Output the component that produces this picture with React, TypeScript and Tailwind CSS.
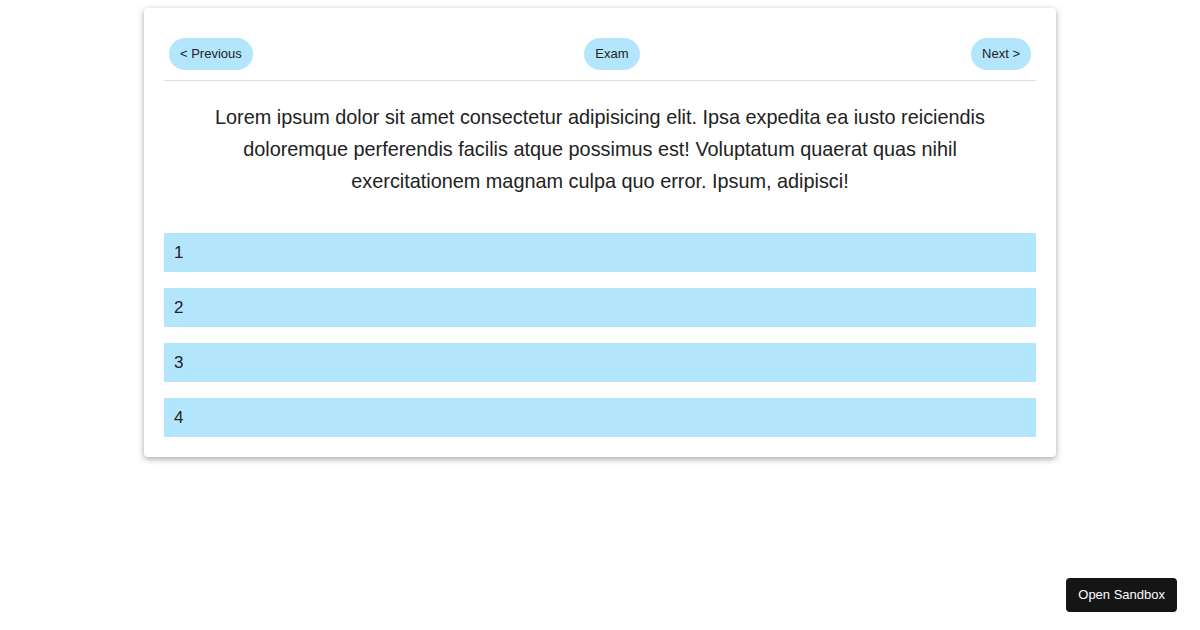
export default function App() {
  const options = ['1', '2', '3', '4'];

  return (
    <div className="min-h-[630px] bg-white font-['Liberation_Sans',Arial,sans-serif] text-[#222]">
      <div className="pt-2 flex justify-center">
        <div className="w-[912px] bg-white rounded-[4px] shadow-[0_2px_6px_rgba(0,0,0,0.35)] px-5 pb-5">
          {/* Header */}
          <div className="flex items-center justify-between pt-[30px] pb-[10px] px-[5px] border-b border-[#dddddd]">
            <button className="h-8 px-[11px] rounded-full bg-[#b3e5fc] text-[13px] text-[#222]">&lt; Previous</button>
            <button className="h-8 px-[11px] rounded-full bg-[#b3e5fc] text-[13px] text-[#222]">Exam</button>
            <button className="h-8 px-[11px] rounded-full bg-[#b3e5fc] text-[13px] text-[#222]">Next &gt;</button>
          </div>

          <p className="mt-5 px-10 text-center text-[19.85px] leading-[32px] text-[#222]">
            Lorem ipsum dolor sit amet consectetur adipisicing elit. Ipsa expedita ea iusto reiciendis doloremque perferendis facilis atque possimus est! Voluptatum quaerat quas nihil exercitationem magnam culpa quo error. Ipsum, adipisci!
          </p>

          <div className="mt-9 flex flex-col gap-4">
            {options.map((o) => (
              <div key={o} className="h-[39px] flex items-center pl-[10px] bg-[#b3e5fc] text-[17px] text-[#222]">
                {o}
              </div>
            ))}
          </div>
        </div>
      </div>

      <button className="fixed right-[23px] bottom-[18px] h-[34px] px-3 rounded-[4px] bg-[#151515] text-white text-[13px]">
        Open Sandbox
      </button>
    </div>
  );
}
